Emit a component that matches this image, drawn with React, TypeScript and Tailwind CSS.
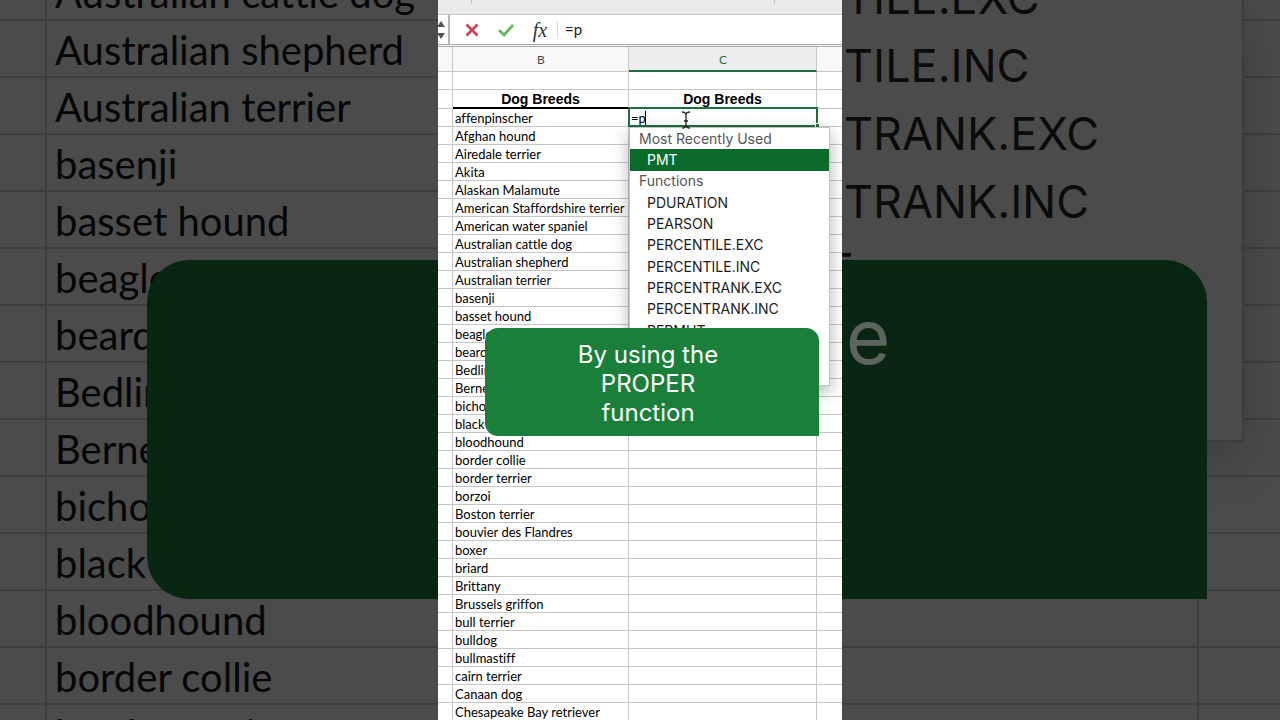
import React from 'react';

const breeds = [
  'affenpinscher',
  'Afghan hound',
  'Airedale terrier',
  'Akita',
  'Alaskan Malamute',
  'American Staffordshire terrier',
  'American water spaniel',
  'Australian cattle dog',
  'Australian shepherd',
  'Australian terrier',
  'basenji',
  'basset hound',
  'beagle',
  'bearded collie',
  'Bedlington terrier',
  'Bernese mountain dog',
  'bichon frise',
  'black and tan coonhound',
  'bloodhound',
  'border collie',
  'border terrier',
  'borzoi',
  'Boston terrier',
  'bouvier des Flandres',
  'boxer',
  'briard',
  'Brittany',
  'Brussels griffon',
  'bull terrier',
  'bulldog',
  'bullmastiff',
  'cairn terrier',
  'Canaan dog',
  'Chesapeake Bay retriever',
];

const functions = [
  'PDURATION',
  'PEARSON',
  'PERCENTILE.EXC',
  'PERCENTILE.INC',
  'PERCENTRANK.EXC',
  'PERCENTRANK.INC',
  'PERMUT',
];

const backdropRows = breeds.slice(7, 21);

const LeftBackdrop = () => {
  return (
    <div className="relative flex h-full flex-1 justify-end overflow-hidden bg-[#4b4b4b]">
      <div className="-mt-9 w-[438px] shrink-0">
        {backdropRows.map((breed) => (
          <div key={breed} className="flex h-[57px]">
            <div className="w-[47px] shrink-0 border-r-2 border-b-2 border-[#3e3e3e]"></div>
            <div className="flex min-w-0 flex-1 items-center border-b-2 border-[#3e3e3e] pt-[3px] pl-2 font-['Lato',sans-serif] text-[40px] whitespace-nowrap text-[#060606] [font-variant-ligatures:none]">
              {breed}
            </div>
          </div>
        ))}
      </div>
      <div className="absolute top-[260px] right-0 h-[339px] w-[291px] rounded-l-[42px] bg-[#082612]"></div>
    </div>
  );
};

const RightBackdrop = () => {
  return (
    <div className="relative h-full flex-1 overflow-hidden bg-[#4b4b4b]">
      <div className="-mt-9">
        {backdropRows.map((breed) => (
          <div key={breed} className="flex h-[57px]">
            <div className="w-[357px] border-r-2 border-b-2 border-[#3e3e3e]"></div>
            <div className="flex-1 border-b-2 border-[#3e3e3e]"></div>
          </div>
        ))}
      </div>
      <div className="absolute top-0 left-0 h-[442px] w-[402px] border-r-2 border-b-2 border-[#3c3c3c] bg-[#4b4b4b] pl-[2px] font-['Inter',sans-serif] text-[45px] text-[#0b0b0b] shadow-[0_16px_48px_rgba(0,0,0,0.2)]">
        <div className="-mt-9">
          <div className="flex h-[68px] items-center">TILE.EXC</div>
          <div className="flex h-[68px] items-center">TILE.INC</div>
          <div className="flex h-[68px] items-center">TRANK.EXC</div>
          <div className="flex h-[68px] items-center">TRANK.INC</div>
          <div className="-ml-5 flex h-[68px] items-center">T</div>
        </div>
      </div>
      <div className="absolute top-[260px] left-0 h-[339px] w-[365px] rounded-tr-[42px] bg-[#082612] pt-[30px] pl-1 font-['Inter',sans-serif] text-[76px] leading-[92px] text-[#5c655e]">
        e
      </div>
    </div>
  );
};

const FormulaBar = () => {
  return (
    <div className="flex h-[29px] items-center bg-white">
      <div className="flex h-full w-3 flex-col items-start justify-center gap-[6px] border-r-2 border-[#b5b5b5]">
        <svg width="7" height="6" viewBox="0 0 7 6">
          <path d="M-1 6L3 0L7 6Z" fill="#555" />
        </svg>
        <svg width="7" height="6" viewBox="0 0 7 6">
          <path d="M-1 0L3 6L7 0Z" fill="#555" />
        </svg>
      </div>
      <button className="ml-[15px]" aria-label="Cancel">
        <svg width="14" height="14" viewBox="0 0 14 14" fill="none">
          <path d="M1.5 1.5L12.5 12.5M12.5 1.5L1.5 12.5" stroke="#c8405a" strokeWidth="2.8" />
        </svg>
      </button>
      <button className="ml-[18px]" aria-label="Enter">
        <svg width="18" height="14" viewBox="0 0 18 14" fill="none">
          <path d="M2 7L7 12L16 2" stroke="#65b95c" strokeWidth="2.8" />
        </svg>
      </button>
      <button
        className="ml-[15px] w-5 text-center font-['Liberation_Serif',serif] text-xl leading-6 text-[#333] italic"
        aria-label="Insert function"
      >
        fx
      </button>
      <input
        className="ml-[7px] h-4 min-w-0 flex-1 border-l border-[#d9d9d9] pl-[7px] font-['Lato',sans-serif] text-[15px] text-[#222] outline-none"
        aria-label="Formula"
        defaultValue="=p"
      />
    </div>
  );
};

const FunctionMenu = () => {
  return (
    <div className="absolute top-[127px] left-[191px] grid h-[259px] w-[201px] grid-rows-12 border border-[#c4c4c4] bg-white pb-px font-['Inter',sans-serif] text-sm text-[#1c1c1c] shadow-[0_6px_16px_rgba(0,0,0,0.3)]">
      <div className="flex items-center pl-[9px] text-[#555]">Most Recently Used</div>
      <button className="flex items-center bg-[#0a6b2b] pl-[17px] text-white">PMT</button>
      <div className="flex items-center pl-[9px] text-[#555]">Functions</div>
      {functions.map((name) => (
        <button key={name} className="flex items-center pl-[17px]">
          {name}
        </button>
      ))}
    </div>
  );
};

const Sheet = () => {
  return (
    <table className="w-full table-fixed border-separate border-spacing-0">
      <colgroup>
        <col className="w-[15px]" />
        <col className="w-[176px]" />
        <col className="w-[188px]" />
        <col />
      </colgroup>
      <thead>
        <tr className="h-[25px] bg-[#f8f8f8] font-['Lato',sans-serif] text-xs text-[#444]">
          <th className="border-r border-b border-[#c6c6c6] p-0"></th>
          <th className="border-r border-b border-[#c6c6c6] p-0 pt-[2px] pl-px font-normal">B</th>
          <th className="border-r border-b-2 border-r-[#c6c6c6] border-b-[#1e6f3c] bg-[#eeeeee] p-0 pt-[2px] pl-px font-normal text-[#1e6f3c]">
            C
          </th>
          <th className="border-b border-[#c6c6c6] p-0"></th>
        </tr>
      </thead>
      <tbody>
        <tr className="h-[18px]">
          <td className="border-r border-b border-[#c6c6c6] p-0"></td>
          <td className="border-r border-b border-[#c6c6c6] p-0"></td>
          <td className="border-r border-b border-[#c6c6c6] p-0"></td>
          <td className="border-b border-[#c6c6c6] p-0"></td>
        </tr>
        <tr className="h-[19px] text-center font-['Liberation_Sans',sans-serif] text-sm leading-4 font-bold text-black">
          <td className="border-r border-b border-[#c6c6c6] p-0"></td>
          <td className="border-r border-b-2 border-r-[#c6c6c6] border-b-black p-0">Dog Breeds</td>
          <td className="border-r border-b border-[#c6c6c6] p-0">Dog Breeds</td>
          <td className="border-b border-[#c6c6c6] p-0"></td>
        </tr>
        {breeds.map((breed, index) => (
          <tr
            key={breed}
            className="h-[18px] font-['Lato',sans-serif] text-[13px] leading-4 text-black [font-variant-ligatures:none]"
          >
            <td className="border-r border-b border-[#c6c6c6] p-0"></td>
            <td className="border-r border-b border-[#c6c6c6] p-0 pl-[2px] whitespace-nowrap">{breed}</td>
            <td className="relative border-r border-b border-[#c6c6c6] p-0">
              {index === 0 && (
                <div className="absolute -top-[2px] -right-[2px] -bottom-px -left-px flex items-center border-2 border-[#1e6f3c] bg-white pt-px pl-px">
                  <input
                    className="w-[14px] bg-transparent leading-4 outline-none"
                    aria-label="Cell C3"
                    defaultValue="=p"
                  />
                  <span className="h-[14px] w-px bg-black"></span>
                  <span className="absolute -right-[3px] -bottom-[2px] h-1 w-1 border-t border-l border-white bg-[#1e6f3c]"></span>
                </div>
              )}
            </td>
            <td className="border-b border-[#c6c6c6] p-0"></td>
          </tr>
        ))}
      </tbody>
    </table>
  );
};

export default function App() {
  return (
    <div className="flex h-screen w-full overflow-hidden">
      <LeftBackdrop />
      <main className="relative h-full w-[404px] shrink-0 overflow-hidden bg-white">
        <div className="flex h-[15px] items-start border-b border-[#c9c9c9] bg-[#ebebeb] pl-[33px]">
          <div className="h-1 w-[304px] border-x border-[#c2c2c2]"></div>
        </div>
        <FormulaBar />
        <div className="h-[3px] border-y border-[#b0b0b0] bg-[#eeeeee]"></div>
        <Sheet />
        <FunctionMenu />
        <svg className="absolute top-[111px] left-[243px]" width="10" height="18" viewBox="0 0 10 18" fill="none">
          <path d="M1 1Q5 1 5 4Q5 1 9 1M5 3V15M1 17Q5 17 5 14Q5 17 9 17M3 10H7" stroke="#222" strokeWidth="1.3" />
        </svg>
        <div className="absolute top-[328px] left-[47px] flex h-[108px] w-[334px] items-center justify-center rounded-[13px] rounded-br-none bg-[#1a7f3a] pt-[2px] pr-2 text-center font-['Inter',sans-serif] text-2xl leading-[29px] text-white">
          <p className="w-[160px]">By using the PROPER function</p>
        </div>
      </main>
      <RightBackdrop />
    </div>
  );
}
